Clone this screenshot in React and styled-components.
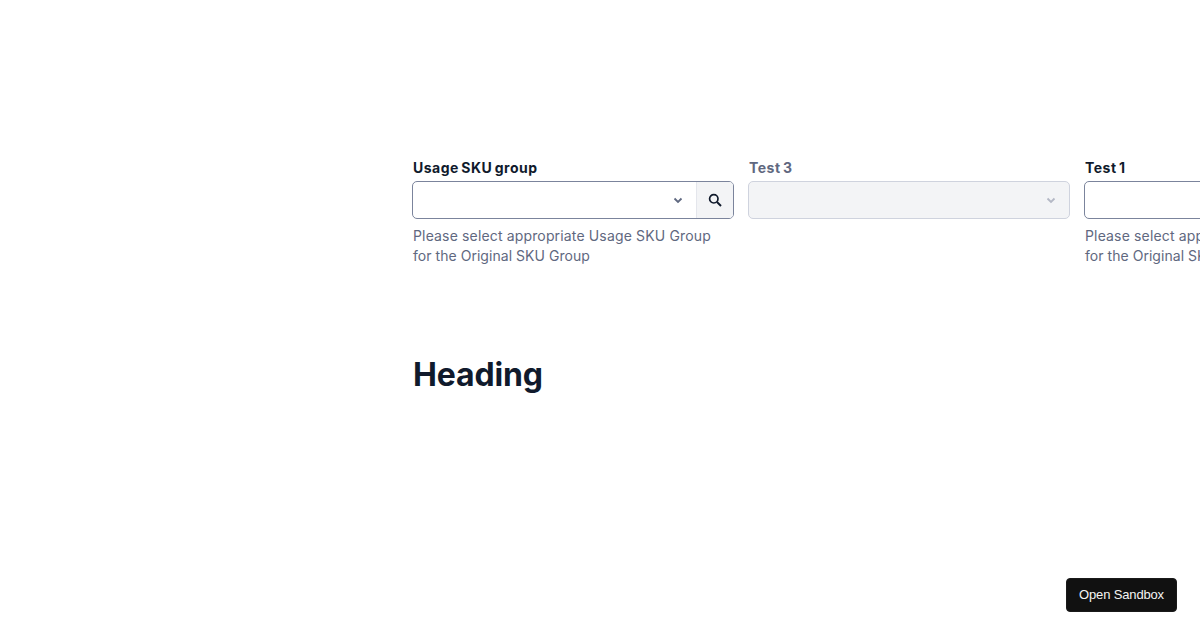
import React from 'react';
import styled, { createGlobalStyle } from 'styled-components';

const GlobalStyle = createGlobalStyle`
    html, body {
        margin: 0;
        padding: 0;
        height: 100%;
        background-color: #ffffff;
        overflow: hidden;
        font-family: Inter, "Liberation Sans", sans-serif;
        font-optical-sizing: none;
    }
`

const Page = styled.div`
    width: 1200px;
    height: 630px;
    padding: 158px 0 0 412px;
    box-sizing: border-box;
    overflow: hidden;
`

const FieldRow = styled.div`
    display: flex;
    flex-direction: row;
    gap: 14px;
    width: 1000px;
`

const Field = styled.div`
    display: flex;
    flex-direction: column;
    flex: 0 0 322px;
    width: 322px;
`

const Label = styled.label`
    height: 20px;
    margin-bottom: 3px;
    padding-left: 1px;
    font-size: 14px;
    line-height: 20px;
    font-weight: 700;
    letter-spacing: 0.5px;
    word-spacing: -1.4px;
    color: ${(props) => (props.$disabled ? '#5f6880' : '#101a2c')};
`

const Control = styled.div`
    display: flex;
    flex-direction: row;
    height: 38px;
    box-sizing: border-box;
    border: 1px solid ${(props) => (props.$disabled ? '#cfd3de' : '#7b849c')};
    border-radius: 5px;
    background-color: ${(props) => (props.$disabled ? '#f3f4f6' : '#ffffff')};
    overflow: hidden;
`

const SelectBox = styled.div`
    display: flex;
    flex: 1;
    align-items: center;
    justify-content: flex-end;
    padding-right: 13px;
`

const SearchButton = styled.button`
    display: flex;
    flex: 0 0 37px;
    align-items: center;
    justify-content: center;
    box-sizing: border-box;
    padding: 0 1px 0 0;
    border: none;
    border-left: 1px solid #e4e6ec;
    background-color: #f3f4f6;
    color: #101a2c;
`

const Hint = styled.p`
    margin: 7px 0 0 1px;
    font-size: 14px;
    line-height: 20px;
    color: #5f6880;
`

const HintLine = styled.span`
    display: block;
    letter-spacing: ${(props) => (props.$tight ? '0.04px' : '0.15px')};
    white-space: nowrap;
`

const Heading = styled.h1`
    margin: 89px 0 0 1px;
    font-size: 32px;
    line-height: 40px;
    font-weight: 700;
    letter-spacing: -0.15px;
    color: #101a2c;
`

const SandboxButton = styled.button`
    position: fixed;
    top: 578px;
    left: 1066px;
    width: 111px;
    height: 34px;
    padding: 0 0 2px;
    border: 1px solid #1a1a1a;
    border-radius: 4px;
    background-color: #111111;
    color: #f4f4f4;
    font-family: "Liberation Sans", Arial, sans-serif;
    font-size: 13px;
    letter-spacing: -0.15px;
`

const Chevron = ({ color }) => (
    <svg width="10" height="7" viewBox="0 0 10 7" fill="none">
        <path d="M1.5 1.5 L5 5 L8.5 1.5" stroke={color} strokeWidth="1.8" />
    </svg>
);

const SearchIcon = () => (
    <svg width="14" height="14" viewBox="0 0 14 14" fill="none">
        <circle cx="5.8" cy="5.8" r="4.2" stroke="currentColor" strokeWidth="1.7" />
        <path d="M9 9 L13 13" stroke="currentColor" strokeWidth="1.9" />
    </svg>
);

const SkuHint = () => (
    <Hint>
        <HintLine>Please select appropriate Usage SKU Group</HintLine>
        <HintLine $tight>for the Original SKU Group</HintLine>
    </Hint>
);

const App = () => {
    return (
        <Page>
            <GlobalStyle />
            <FieldRow>
                <Field>
                    <Label>Usage SKU group</Label>
                    <Control>
                        <SelectBox>
                            <Chevron color="#5f6880" />
                        </SelectBox>
                        <SearchButton>
                            <SearchIcon />
                        </SearchButton>
                    </Control>
                    <SkuHint />
                </Field>
                <Field>
                    <Label $disabled>Test 3</Label>
                    <Control $disabled>
                        <SelectBox>
                            <Chevron color="#b4b8c5" />
                        </SelectBox>
                    </Control>
                </Field>
                <Field>
                    <Label>Test 1</Label>
                    <Control>
                        <SelectBox />
                    </Control>
                    <SkuHint />
                </Field>
            </FieldRow>
            <Heading>Heading</Heading>
            <SandboxButton>Open Sandbox</SandboxButton>
        </Page>
    );
};

export default App;
